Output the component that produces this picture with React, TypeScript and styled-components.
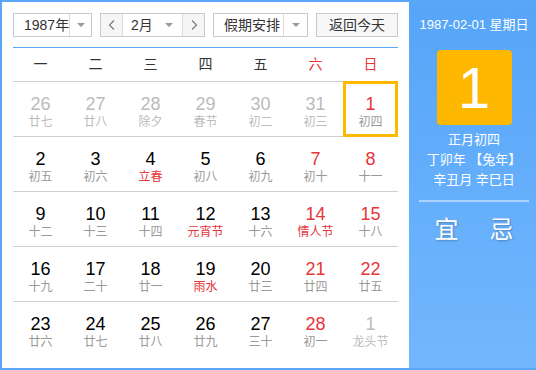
import * as React from 'react';
import styled, { createGlobalStyle } from 'styled-components';

const GlobalStyle = createGlobalStyle`
    html, body {
        margin: 0;
        padding: 0;
        background: #fff;
    }
    body {
        font-family: "Liberation Sans", "Noto Sans CJK SC", Arial, sans-serif;
    }
`;

type Day = {
    num: number;
    lunar: string;
    other?: boolean;
    weekend?: boolean;
    fest?: boolean;
    selected?: boolean;
};

const weeks: Day[][] = [
    [
        { num: 26, lunar: '廿七', other: true },
        { num: 27, lunar: '廿八', other: true },
        { num: 28, lunar: '除夕', other: true },
        { num: 29, lunar: '春节', other: true },
        { num: 30, lunar: '初二', other: true },
        { num: 31, lunar: '初三', other: true },
        { num: 1, lunar: '初四', weekend: true, selected: true },
    ],
    [
        { num: 2, lunar: '初五' },
        { num: 3, lunar: '初六' },
        { num: 4, lunar: '立春', fest: true },
        { num: 5, lunar: '初八' },
        { num: 6, lunar: '初九' },
        { num: 7, lunar: '初十', weekend: true },
        { num: 8, lunar: '十一', weekend: true },
    ],
    [
        { num: 9, lunar: '十二' },
        { num: 10, lunar: '十三' },
        { num: 11, lunar: '十四' },
        { num: 12, lunar: '元宵节', fest: true },
        { num: 13, lunar: '十六' },
        { num: 14, lunar: '情人节', weekend: true, fest: true },
        { num: 15, lunar: '十八', weekend: true },
    ],
    [
        { num: 16, lunar: '十九' },
        { num: 17, lunar: '二十' },
        { num: 18, lunar: '廿一' },
        { num: 19, lunar: '雨水', fest: true },
        { num: 20, lunar: '廿三' },
        { num: 21, lunar: '廿四', weekend: true },
        { num: 22, lunar: '廿五', weekend: true },
    ],
    [
        { num: 23, lunar: '廿六' },
        { num: 24, lunar: '廿七' },
        { num: 25, lunar: '廿八' },
        { num: 26, lunar: '廿九' },
        { num: 27, lunar: '三十' },
        { num: 28, lunar: '初一', weekend: true },
        { num: 1, lunar: '龙头节', other: true },
    ],
];

const weekdays = ['一', '二', '三', '四', '五', '六', '日'];

function Chevron({ dir }: { dir: 'left' | 'right' }) {
    return (
        <svg width="8" height="12" viewBox="0 0 8 12">
            <polyline
                points={dir === 'left' ? '6,1.5 1.5,6 6,10.5' : '2,1.5 6.5,6 2,10.5'}
                fill="none"
                stroke="#777"
                strokeWidth="1.1"
            />
        </svg>
    );
}

export default function App() {
    return (
        <>
            <GlobalStyle />
            <Frame>
                <Main>
                    <Toolbar>
                        <SelectBox $width={79}>
                            <SelectLabel>1987年</SelectLabel>
                            <SelectArrow $width={24}>
                                <Triangle />
                            </SelectArrow>
                        </SelectBox>
                        <MonthGroup>
                            <NavButton $side="left">
                                <Chevron dir="left" />
                            </NavButton>
                            <MonthLabel>
                                <span>2月</span>
                                <Triangle />
                            </MonthLabel>
                            <NavButton $side="right">
                                <Chevron dir="right" />
                            </NavButton>
                        </MonthGroup>
                        <SelectBox $width={95}>
                            <SelectLabel>假期安排</SelectLabel>
                            <SelectArrow $width={23}>
                                <Triangle />
                            </SelectArrow>
                        </SelectBox>
                        <TodayButton>返回今天</TodayButton>
                    </Toolbar>

                    <Table>
                        <HeadRow>
                            {weekdays.map((w, i) => (
                                <HeadCell key={w} $red={i >= 5}>
                                    {w}
                                </HeadCell>
                            ))}
                        </HeadRow>
                        {weeks.map((week, wi) => (
                            <WeekRow key={wi} $last={wi === weeks.length - 1}>
                                {week.map((d, di) => (
                                    <DayCell key={di} $selected={d.selected}>
                                        <DayNum $other={d.other} $red={d.weekend}>
                                            {d.num}
                                        </DayNum>
                                        <Lunar $other={d.other} $fest={d.fest}>
                                            {d.lunar}
                                        </Lunar>
                                    </DayCell>
                                ))}
                            </WeekRow>
                        ))}
                    </Table>
                </Main>

                <Side>
                    <SideDate>1987-02-01 星期日</SideDate>
                    <BigDay>1</BigDay>
                    <InfoLines>
                        <div>正月初四</div>
                        <div>丁卯年 【兔年】</div>
                        <div>辛丑月 辛巳日</div>
                    </InfoLines>
                    <SideDivider />
                    <YiJi>
                        <span>宜</span>
                        <span>忌</span>
                    </YiJi>
                </Side>
            </Frame>
        </>
    );
}

const Frame = styled.div`
    display: flex;
    width: 536px;
    height: 370px;
    box-sizing: border-box;
    border: 2px solid #5aa6f7;
    border-right: none;
`;

const Main = styled.div`
    width: 407px;
    box-sizing: border-box;
    padding: 11px 11px 0;
    background: #fff;
`;

const Toolbar = styled.div`
    display: flex;
    justify-content: space-between;
    height: 24px;
    margin-bottom: 10px;
    font-size: 14px;
    color: #333;
`;

const SelectBox = styled.div<{ $width: number }>`
    display: flex;
    width: ${(p) => p.$width}px;
    height: 24px;
    box-sizing: border-box;
    border: 1px solid #c9c9c9;
    background: #fff;
`;

const SelectLabel = styled.div`
    flex: 1;
    padding-left: 10px;
    line-height: 22px;
    white-space: nowrap;
`;

const SelectArrow = styled.div<{ $width: number }>`
    display: flex;
    align-items: center;
    justify-content: center;
    width: ${(p) => p.$width}px;
    border-left: 1px solid #dcdcdc;
`;

const Triangle = styled.i`
    display: block;
    width: 0;
    height: 0;
    border-left: 4px solid transparent;
    border-right: 4px solid transparent;
    border-top: 4px solid #999;
`;

const MonthGroup = styled.div`
    display: flex;
    width: 105px;
    height: 24px;
    box-sizing: border-box;
    border: 1px solid #c9c9c9;
`;

const NavButton = styled.div<{ $side: 'left' | 'right' }>`
    display: flex;
    align-items: center;
    justify-content: center;
    width: 21px;
    background: #f5f5f5;
    ${(p) => (p.$side === 'left' ? 'border-right' : 'border-left')}: 1px solid #dcdcdc;
`;

const MonthLabel = styled.div`
    flex: 1;
    display: flex;
    align-items: center;
    justify-content: space-between;
    padding: 0 9px 0 8px;
    line-height: 22px;
    background: #fff;
`;

const TodayButton = styled.div`
    width: 82px;
    height: 24px;
    box-sizing: border-box;
    border: 1px solid #c9c9c9;
    background: #f7f7f7;
    line-height: 22px;
    text-align: center;
`;

const Table = styled.div`
    border-top: 1px solid #5aa6f7;
`;

const HeadRow = styled.div`
    display: grid;
    grid-template-columns: repeat(7, 55px);
    height: 33px;
    border-bottom: 1px solid #d0d0d0;
`;

const HeadCell = styled.div<{ $red?: boolean }>`
    line-height: 33px;
    text-align: center;
    font-size: 14px;
    color: ${(p) => (p.$red ? '#e8353a' : '#333')};
`;

const WeekRow = styled.div<{ $last?: boolean }>`
    display: grid;
    grid-template-columns: repeat(7, 55px);
    height: 54px;
    border-bottom: 1px solid ${(p) => (p.$last ? 'transparent' : '#d0d0d0')};
`;

const DayCell = styled.div<{ $selected?: boolean }>`
    position: relative;
    padding-top: 12px;
    text-align: center;

    &::after {
        content: '';
        display: ${(p) => (p.$selected ? 'block' : 'none')};
        position: absolute;
        left: 0;
        right: 0;
        top: -1px;
        bottom: -1px;
        border: 3px solid #ffb800;
    }
`;

const DayNum = styled.div<{ $other?: boolean; $red?: boolean }>`
    font-size: 18px;
    line-height: 20px;
    color: ${(p) => (p.$other ? '#bbb' : p.$red ? '#e8353a' : '#000')};
`;

const Lunar = styled.div<{ $other?: boolean; $fest?: boolean }>`
    font-size: 12px;
    line-height: 16px;
    color: ${(p) => (p.$other ? '#bbb' : p.$fest ? '#e8353a' : '#999')};
`;

const Side = styled.div`
    flex: 1;
    display: flex;
    flex-direction: column;
    align-items: center;
    padding: 13px 0 0 3px;
    background: linear-gradient(#56a5f8, #72b7fe);
    color: #fff;
`;

const SideDate = styled.div`
    font-size: 13px;
    line-height: 20px;
    white-space: nowrap;
`;

const BigDay = styled.div`
    width: 75px;
    height: 75px;
    margin-top: 15px;
    border-radius: 4px;
    background: #ffb800;
    font-size: 58px;
    line-height: 75px;
    text-align: center;
    color: #fff;
`;

const InfoLines = styled.div`
    margin-top: 5px;
    font-size: 13px;
    line-height: 20px;
    text-align: center;
    white-space: nowrap;
`;

const SideDivider = styled.div`
    width: 110px;
    height: 2px;
    margin-top: 10px;
    background: rgba(255, 255, 255, 0.45);
`;

const YiJi = styled.div`
    display: flex;
    gap: 31px;
    margin-top: 13px;
    font-size: 24px;
    line-height: 30px;
    text-shadow: 1px 1px 2px rgba(0, 0, 0, 0.25);
`;
